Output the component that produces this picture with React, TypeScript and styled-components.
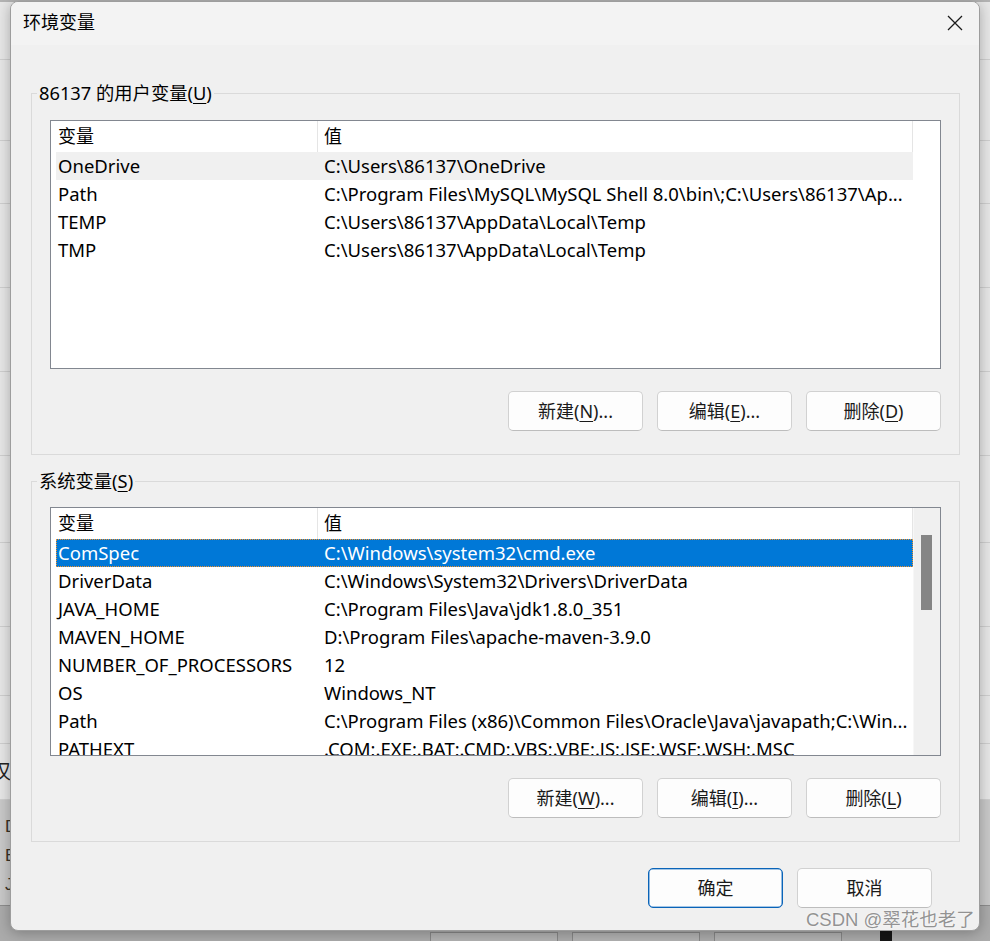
import React from "react";
import styled, { createGlobalStyle } from "styled-components";

const FONT = `"Noto Sans", "Noto Sans CJK SC", sans-serif`;

const GlobalStyle = createGlobalStyle`
  html, body { margin: 0; padding: 0; }
  body { background: #a9a9a9; font-family: ${FONT}; }
  * { box-sizing: border-box; }
`;

/* ---------- background window (behind the dialog) ---------- */
const Desktop = styled.div`
  position: relative;
  width: 990px;
  height: 941px;
  overflow: hidden;
  display: flex;
  flex-direction: column;
  background: #a9a9a9;
`;
const BackTop = styled.div`
  flex: none;
  height: 2px;
  background: #b3b3b3;
`;
const BackRows = styled.div`
  flex: none;
  display: flex;
  flex-direction: column;
  background: #e7e7e7;
`;
const BackRow = styled.div<{ $h: number }>`
  height: ${(p) => p.$h}px;
  border-bottom: 1px solid #cfcfcf;
  font-size: 20px;
  line-height: ${(p) => p.$h}px;
  color: #222;
  padding-left: 0;
  text-indent: -9px;
  overflow: hidden;
`;
const BackPanel = styled.div`
  flex: none;
  height: 106px;
  background: #c9c9c9;
  border-bottom: 1px solid #8d8d8d;
  display: flex;
  flex-direction: column;
  padding: 12px 0 0 5px;
  font-family: "Liberation Sans", sans-serif;
  font-size: 17px;
  line-height: 29px;
  color: #3a3226;
`;
const BackBottom = styled.div`
  flex: 1;
  display: flex;
  align-items: flex-end;
  padding-left: 430px;
  gap: 14px;
  background: #ababab;
`;
const BackBox = styled.div`
  width: 128px;
  height: 9px;
  border: 1px solid #878787;
  border-bottom: none;
  background: #b2b2b2;
`;
const BackBlack = styled.div`
  width: 12px;
  height: 10px;
  margin-left: 24px;
  background: #151515;
`;

/* ---------- dialog ---------- */
const Dialog = styled.div`
  position: absolute;
  left: 10px;
  top: 1px;
  width: 970px;
  height: 930px;
  border: 1px solid #9d9d9d;
  border-radius: 8px;
  overflow: hidden;
  background: #f0f0f0;
  display: flex;
  flex-direction: column;
  box-shadow: 0 2px 14px rgba(0, 0, 0, 0.28);
  font-family: ${FONT};
  color: #000;
`;
const TitleBar = styled.div`
  flex: none;
  height: 43px;
  background: #f3f3f3;
  display: flex;
  align-items: center;
  justify-content: space-between;
  padding-left: 12px;
`;
const Title = styled.div`
  font-size: 18px;
  line-height: 24px;
  padding-bottom: 3px;
  color: #000;
`;
const CloseButton = styled.div`
  width: 48px;
  height: 43px;
  display: flex;
  align-items: center;
  justify-content: center;
  padding-bottom: 2px;
`;
const Body = styled.div`
  flex: 1;
  display: flex;
  flex-direction: column;
  padding: 0 19px 0 20px;
`;
const Group = styled.section<{ $top: number }>`
  margin-top: ${(p) => p.$top}px;
  border: 1px solid #dadada;
  padding: 0 18px 23px 18px;
  display: flex;
  flex-direction: column;
`;
const GroupLabel = styled.div`
  align-self: flex-start;
  margin: -13px 0 0 -13px;
  padding: 0 2px;
  background: #f0f0f0;
  font-size: 18.3px;
  line-height: 24px;
`;
const List = styled.div<{ $top: number }>`
  margin-top: ${(p) => p.$top}px;
  height: 249px;
  border: 1px solid #828790;
  background: #fff;
  display: flex;
  overflow: hidden;
`;
const ListMain = styled.div`
  width: 862px;
  flex: none;
  display: flex;
  flex-direction: column;
  overflow: hidden;
`;
const HeaderRow = styled.div`
  flex: none;
  height: 31px;
  display: flex;
`;
const HeaderCell = styled.div<{ $w: number; $pad: number }>`
  width: ${(p) => p.$w}px;
  flex: none;
  padding-left: ${(p) => p.$pad}px;
  border-right: 1px solid #e5e5e5;
  font-size: 18px;
  line-height: 31px;
  white-space: nowrap;
`;
const Row = styled.div<{ $state?: "hover" | "selected" }>`
  flex: none;
  margin-left: 5px;
  width: 857px;
  height: 28px;
  display: flex;
  font-size: 18.5px;
  line-height: 28px;
  white-space: nowrap;
  background: ${(p) =>
    p.$state === "selected" ? "#0078d7" : p.$state === "hover" ? "#f0f0f0" : "transparent"};
  color: ${(p) => (p.$state === "selected" ? "#fff" : "#000")};
  outline: ${(p) => (p.$state === "selected" ? "1px dotted #f5922a" : "none")};
  outline-offset: -1px;
`;
const NameCell = styled.div`
  width: 262px;
  flex: none;
  padding-left: 2px;
  overflow: hidden;
`;
const ValueCell = styled.div`
  flex: 1;
  padding-left: 6px;
  overflow: hidden;
`;
const ScrollTrack = styled.div`
  flex: none;
  width: 27px;
  background: #f0f0f0;
  border-left: 1px solid #f7f7f7;
  padding: 27px 0 0 7px;
`;
const ScrollThumb = styled.div`
  width: 11px;
  height: 75px;
  background: #858585;
`;
const ButtonRow = styled.div<{ $top: number }>`
  margin-top: ${(p) => p.$top}px;
  display: flex;
  justify-content: flex-end;
  gap: 14px;
`;
const Button = styled.button<{ $primary?: boolean }>`
  width: 135px;
  height: 40px;
  padding: 0 0 2px 0;
  border: 1px solid ${(p) => (p.$primary ? "#0a64b8" : "#d1d1d1")};
  border-bottom-color: ${(p) => (p.$primary ? "#0a64b8" : "#bdbdbd")};
  box-shadow: ${(p) => (p.$primary ? "inset 0 0 0 0.6px #4d8fd0" : "none")};
  border-radius: 5px;
  background: #fdfdfd;
  font-family: ${FONT};
  font-size: 18px;
  color: #1a1a1a;
  cursor: default;
  u {
    text-decoration-thickness: 1px;
    text-underline-offset: 3px;
  }
`;
const Footer = styled.div`
  margin-top: 26px;
  padding-right: 28px;
  display: flex;
  justify-content: flex-end;
  gap: 14px;
`;
const Mnemonic = styled.u`
  text-decoration-thickness: 1px;
  text-underline-offset: 3px;
`;
const Watermark = styled.div`
  position: absolute;
  left: 806px;
  top: 907px;
  font-family: "Liberation Sans", "Noto Sans CJK SC", sans-serif;
  font-size: 18.5px;
  line-height: 26px;
  color: rgba(128, 128, 128, 0.85);
  text-shadow: 0 0 2px rgba(255, 255, 255, 0.9);
  white-space: nowrap;
`;

type Var = [string, string];

const userVars: Var[] = [
  ["OneDrive", "C:\\Users\\86137\\OneDrive"],
  ["Path", "C:\\Program Files\\MySQL\\MySQL Shell 8.0\\bin\\;C:\\Users\\86137\\Ap..."],
  ["TEMP", "C:\\Users\\86137\\AppData\\Local\\Temp"],
  ["TMP", "C:\\Users\\86137\\AppData\\Local\\Temp"],
];

const sysVars: Var[] = [
  ["ComSpec", "C:\\Windows\\system32\\cmd.exe"],
  ["DriverData", "C:\\Windows\\System32\\Drivers\\DriverData"],
  ["JAVA_HOME", "C:\\Program Files\\Java\\jdk1.8.0_351"],
  ["MAVEN_HOME", "D:\\Program Files\\apache-maven-3.9.0"],
  ["NUMBER_OF_PROCESSORS", "12"],
  ["OS", "Windows_NT"],
  ["Path", "C:\\Program Files (x86)\\Common Files\\Oracle\\Java\\javapath;C:\\Win..."],
  ["PATHEXT", ".COM;.EXE;.BAT;.CMD;.VBS;.VBE;.JS;.JSE;.WSF;.WSH;.MSC"],
];

const backRows = [58, 81, 63, 84, 84, 84, 87, 84, 69, 48];

function VarList({
  vars,
  top,
  marked,
  selected,
  scroll,
}: {
  vars: Var[];
  top: number;
  marked?: number;
  selected?: number;
  scroll?: boolean;
}) {
  return (
    <List $top={top}>
      <ListMain>
        <HeaderRow>
          <HeaderCell $w={267} $pad={7}>变量</HeaderCell>
          <HeaderCell $w={595} $pad={6}>值</HeaderCell>
        </HeaderRow>
        {vars.map(([n, v], i) => (
          <Row
            key={n + i}
            $state={i === selected ? "selected" : i === marked ? "hover" : undefined}
          >
            <NameCell>{n}</NameCell>
            <ValueCell>{v}</ValueCell>
          </Row>
        ))}
      </ListMain>
      {scroll && (
        <ScrollTrack>
          <ScrollThumb />
        </ScrollTrack>
      )}
    </List>
  );
}

function CloseIcon() {
  return (
    <svg width="16" height="16" viewBox="0 0 16 16">
      <path d="M1 1 L15 15 M15 1 L1 15" stroke="#1b1b1b" strokeWidth="1.25" fill="none" />
    </svg>
  );
}

export default function App() {
  return (
    <>
      <GlobalStyle />
      <Desktop>
        <BackTop />
        <BackRows>
          {backRows.map((h, i) => (
            <BackRow key={i} $h={h} />
          ))}
          <BackRow $h={56}>汉</BackRow>
        </BackRows>
        <BackPanel>
          <span>D</span>
          <span>E</span>
          <span>J</span>
        </BackPanel>
        <BackBottom>
          <BackBox />
          <BackBox />
          <BackBox />
          <BackBlack />
        </BackBottom>

        <Dialog>
          <TitleBar>
            <Title>环境变量</Title>
            <CloseButton>
              <CloseIcon />
            </CloseButton>
          </TitleBar>
          <Body>
            <Group $top={48}>
              <GroupLabel>
                86137 的用户变量(<Mnemonic>U</Mnemonic>)
              </GroupLabel>
              <VarList vars={userVars} top={15} marked={0} />
              <ButtonRow $top={22}>
                <Button>新建(<u>N</u>)...</Button>
                <Button>编辑(<u>E</u>)...</Button>
                <Button>删除(<u>D</u>)</Button>
              </ButtonRow>
            </Group>
            <Group $top={26}>
              <GroupLabel>
                系统变量(<Mnemonic>S</Mnemonic>)
              </GroupLabel>
              <VarList vars={sysVars} top={14} selected={0} scroll />
              <ButtonRow $top={22}>
                <Button>新建(<u>W</u>)...</Button>
                <Button>编辑(<u>I</u>)...</Button>
                <Button>删除(<u>L</u>)</Button>
              </ButtonRow>
            </Group>
            <Footer>
              <Button $primary>确定</Button>
              <Button>取消</Button>
            </Footer>
          </Body>
        </Dialog>
        <Watermark>CSDN @翠花也老了</Watermark>
      </Desktop>
    </>
  );
}
